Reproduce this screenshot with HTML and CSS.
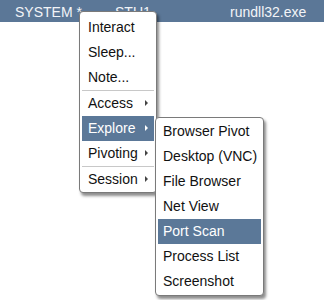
FILE: index.html
```html
<!DOCTYPE html>
<html>
<head>
<meta charset="utf-8">
<link rel="stylesheet" href="styles.css">
</head>
<body>
<div class="bar">
  <span class="col c1">SYSTEM *</span>
  <span class="col c2">STU1</span>
  <span class="col c3">rundll32.exe</span>
</div>
<div class="menu menu-main">
  <div class="item">Interact</div>
  <div class="item">Sleep...</div>
  <div class="item">Note...</div>
  <div class="sep"></div>
  <div class="item sub">Access<span class="arrow"></span></div>
  <div class="item sub active">Explore<span class="arrow"></span></div>
  <div class="item sub">Pivoting<span class="arrow"></span></div>
  <div class="sep"></div>
  <div class="item sub">Session<span class="arrow"></span></div>
</div>
<div class="menu menu-sub">
  <div class="item">Browser Pivot</div>
  <div class="item">Desktop (VNC)</div>
  <div class="item">File Browser</div>
  <div class="item">Net View</div>
  <div class="item active">Port Scan</div>
  <div class="item">Process List</div>
  <div class="item">Screenshot</div>
</div>
</body>
</html>
```
FILE: styles.css
```css
html, body {
  margin: 0;
  padding: 0;
  background: #ffffff;
  width: 324px;
  height: 300px;
  overflow: hidden;
  font-family: "Liberation Sans", Arial, sans-serif;
  font-size: 14px;
}
.bar {
  height: 22px;
  background: #5b7797;
  color: #f2f4f7;
  display: flex;
  box-sizing: border-box;
  padding-top: 2px;
  line-height: 20px;
  font-size: 14px;
}
.col { display: block; white-space: nowrap; }
.c1 { width: 100px; padding-left: 15px; }
.c2 { width: 115px; }
.c3 { flex: 1; }
.menu {
  position: absolute;
  background: #ffffff;
  border: 1px solid #7a7a7a;
  border-radius: 4px;
  box-shadow: 2px 3px 3px rgba(0,0,0,0.45);
  box-sizing: border-box;
  color: #111111;
}
.menu-main {
  left: 79px;
  top: 11px;
  width: 78px;
  height: 182px;
  padding: 3px 1px 0 1px;
}
.menu-sub {
  left: 155px;
  top: 117px;
  width: 109px;
  height: 179px;
  padding: 1px 1px 0 1px;
}
.item {
  position: relative;
  height: 25px;
  line-height: 25px;
  padding-left: 6px;
  margin: 0 1px;
  white-space: nowrap;
}
.menu-sub .item { padding-left: 5px; }
.item.active {
  background: #5b7898;
  color: #ffffff;
}
.sep {
  height: 1px;
  background: #c8c8c8;
  margin: 0 1px;
}
.arrow {
  position: absolute;
  right: 6px;
  top: 9px;
  width: 0;
  height: 0;
  border-top: 3px solid transparent;
  border-bottom: 3px solid transparent;
  border-left: 3px solid #444444;
}
.item.active .arrow { border-left-color: #ffffff; }
```
